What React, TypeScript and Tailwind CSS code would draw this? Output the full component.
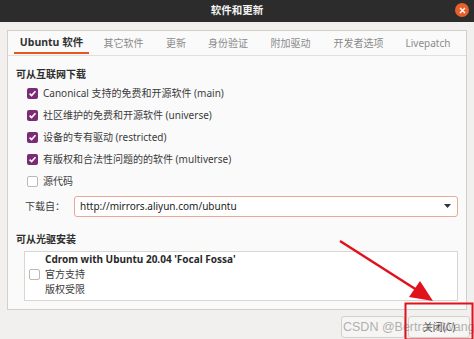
import React from "react";

const tabs = [
  { name: "Ubuntu 软件", w: "w-[75px]" },
  { name: "其它软件", w: "w-[57px]" },
  { name: "更新", w: "w-[36px]" },
  { name: "身份验证", w: "w-[56px]" },
  { name: "附加驱动", w: "w-[57px]" },
  { name: "开发者选项", w: "w-[67px]" },
  { name: "Livepatch", w: "w-[60px]" },
];

const sources = [
  { label: "Canonical 支持的免费和开源软件 (main)", checked: true },
  { label: "社区维护的免费和开源软件 (universe)", checked: true },
  { label: "设备的专有驱动 (restricted)", checked: true },
  { label: "有版权和合法性问题的的软件 (multiverse)", checked: true },
  { label: "源代码", checked: false },
];

const CheckBox = ({ checked }: { checked: boolean }) =>
  checked ? (
    <span className="flex w-[11px] h-[11px] shrink-0 items-center justify-center rounded-[2px] bg-[#7b2a76]">
      <svg width="9" height="9" viewBox="0 0 9 9">
        <path d="M1.6 4.6 L3.6 6.6 L7.5 2.3" fill="none" stroke="#fff" strokeWidth="1.6" />
      </svg>
    </span>
  ) : (
    <span className="block w-[11px] h-[11px] shrink-0 rounded-[2px] border border-[#bdb8b3] bg-white" />
  );

export default function App() {
  return (
    <div
      className="relative w-[474px] h-[339px] overflow-hidden bg-[#f1f0ef] text-[#3c3c3c] flex flex-col"
      style={{ fontFamily: '"Noto Sans", "Noto Sans CJK SC", sans-serif' }}
    >
      {/* title bar */}
      <div className="relative h-[22px] shrink-0 bg-[#2c2c2c] flex items-center justify-center">
        <span className="text-[10.5px] font-bold text-[#f2f2f2]">软件和更新</span>
        <span className="absolute right-[5px] top-[3px] flex w-[14px] h-[14px] items-center justify-center rounded-full bg-[#e6602c]">
          <svg width="7" height="7" viewBox="0 0 7 7">
            <path d="M1 1 L6 6 M6 1 L1 6" stroke="#fff" strokeWidth="1.4" />
          </svg>
        </span>
      </div>

      <div className="px-[7px] pt-[8px]">
        <div className="h-[280px] border border-[#d3cfcb] bg-[#fafafa] flex flex-col">
          {/* tabs */}
          <div className="h-[25px] shrink-0 flex pl-[6px] gap-[6px] border-b border-[#e2dfdc]">
            {tabs.map((t, i) => (
              <div
                key={t.name}
                className={
                  i === 0
                    ? "relative shrink-0 whitespace-nowrap flex items-center justify-center text-[10.5px] font-bold text-[#333] " + t.w
                    : "relative shrink-0 whitespace-nowrap flex items-center justify-center text-[10px] text-[#8a8a8a] " + t.w
                }
              >
                {t.name}
                {i === 0 && <span className="absolute left-0 right-0 bottom-[1px] h-[2px] bg-[#e95420]" />}
              </div>
            ))}
          </div>

          {/* content */}
          <div className="px-[8px] pt-[10px] text-[10px]">
            <div className="h-[16px] leading-[16px] font-bold text-[#2e2e2e]">可从互联网下载</div>
            {sources.map((s) => (
              <div key={s.label} className="h-[22px] ml-[11px] flex items-center gap-[5px]">
                <CheckBox checked={s.checked} />
                <span>{s.label}</span>
              </div>
            ))}

            <div className="mt-[4px] h-[21px] flex items-center">
              <span className="ml-[9px] w-[49px] shrink-0">下载自：</span>
              <div className="flex-1 h-[21px] rounded-[3px] border border-[#e9a994] bg-white flex items-center pl-[5px] pr-[6px]">
                <span className="flex-1 text-[#222]">http://mirrors.aliyun.com/ubuntu</span>
                <svg width="7" height="5" viewBox="0 0 7 5">
                  <path d="M0 0 L7 0 L3.5 4 Z" fill="#333" />
                </svg>
              </div>
            </div>

            <div className="mt-[14px] h-[16px] leading-[16px] font-bold text-[#2e2e2e]">可从光驱安装</div>
            <div className="mt-[4px] ml-[8px] h-[50px] border border-[#d9d5d1] bg-white flex items-start pl-[4px]">
              <span className="mt-[17px]">
                <CheckBox checked={false} />
              </span>
              <div className="ml-[5px] leading-[15px]">
                <div className="font-bold text-[#2a2a2a]">Cdrom with Ubuntu 20.04 'Focal Fossa'</div>
                <div>官方支持</div>
                <div>版权受限</div>
              </div>
            </div>
          </div>
        </div>
      </div>

      {/* buttons */}
      <div className="pt-[6px] pr-[4px] flex justify-end gap-[3px] text-[10px]">
        <div className="w-[64px] h-[22px] rounded-[3px] border border-[#d3cfcb] bg-[#f6f5f4]" />
        <div className="w-[62px] h-[22px] rounded-[3px] border border-[#d3cfcb] bg-[#f6f5f4] flex items-center justify-center text-[#444]">
          关闭(C)
        </div>
      </div>

      {/* watermark */}
      <span
        className="absolute left-[343px] top-[318px] whitespace-nowrap text-[12.5px] text-[#a0a0a0] opacity-80"
        style={{ fontFamily: '"Liberation Sans", "Noto Sans CJK SC", sans-serif' }}
      >
        CSDN @BertrandWang
      </span>

      {/* red annotation */}
      <svg className="absolute inset-0 pointer-events-none" width="474" height="339" viewBox="0 0 474 339">
        <line x1="340" y1="241" x2="420" y2="292" stroke="#e0121c" strokeWidth="2.5" />
        <polygon points="433,301 409,297 420,281" fill="#e0121c" />
        <rect x="405.5" y="303.5" width="67" height="36" fill="none" stroke="#e0121c" strokeWidth="2" />
      </svg>
    </div>
  );
}
